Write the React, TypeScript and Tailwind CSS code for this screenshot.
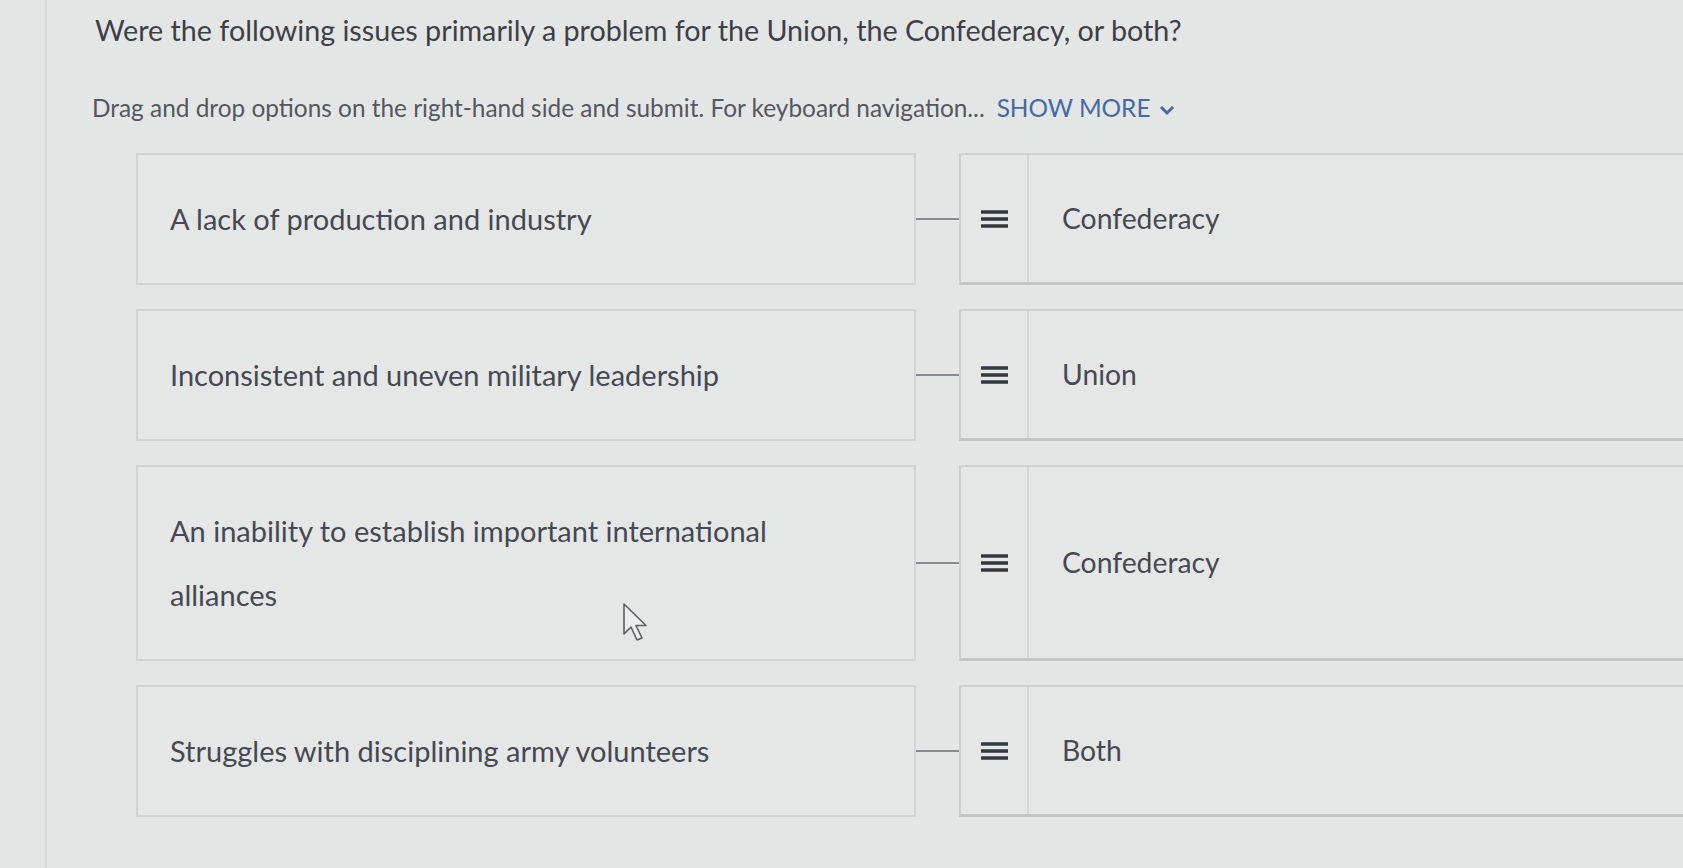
import React from "react";

type Row = { issue: string; answer: string; tall?: boolean };

const ROWS: Row[] = [
  { issue: "A lack of production and industry", answer: "Confederacy" },
  { issue: "Inconsistent and uneven military leadership", answer: "Union" },
  {
    issue: "An inability to establish important international alliances",
    answer: "Confederacy",
    tall: true,
  },
  { issue: "Struggles with disciplining army volunteers", answer: "Both" },
];

function DragHandle() {
  return (
    <svg width="29" height="20" viewBox="0 0 29 20" fill="none">
      <path d="M1 3h27M1 10h27M1 17h27" stroke="#33373f" strokeWidth="3.4" />
    </svg>
  );
}

function Cursor() {
  return (
    <svg
      className="pointer-events-none absolute left-[622px] top-[602px]"
      width="28"
      height="40"
      viewBox="0 0 28 40"
      fill="none"
    >
      <path
        d="M2 2 L2 32 L9 25 L15 38 L20 36 L14 23.5 L24 23.5 Z"
        fill="#eceeed"
        stroke="#5a5e66"
        strokeWidth="1.6"
        strokeLinejoin="round"
      />
    </svg>
  );
}

export default function App() {
  return (
    <div
      className="relative h-[868px] w-full overflow-hidden bg-[#e4e6e5] text-[#454953]"
      style={{ fontFamily: "Lato, 'Open Sans', sans-serif" }}
    >
      <div className="ml-[45px] h-full border-l-2 border-[#d7d9d8]">
        <h1 className="pl-[48px] pt-[13px] text-[28.7px] leading-[34px] text-[#3c4049]">
          Were the following issues primarily a problem for the Union, the Confederacy, or both?
        </h1>
        <p className="mt-[46px] flex items-center pl-[45px] text-[24.4px] leading-[30px] text-[#535761]">
          <span>
            Drag and drop options on the right-hand side and submit. For keyboard navigation...
          </span>
          <span className="ml-[12px] text-[#436aa6]">SHOW MORE</span>
          <svg className="ml-[9px] mt-[4px]" width="16" height="12" viewBox="0 0 16 12" fill="none">
            <path d="M2 3l6 6 6-6" stroke="#436aa6" strokeWidth="3" />
          </svg>
        </p>

        <div className="mt-[30px] flex flex-col gap-[24px] pl-[89px]">
          {ROWS.map((row) => (
            <div key={row.issue} className="flex items-stretch">
              <div
                className={`w-[780px] shrink-0 border-2 border-[#d1d4d3] bg-[#e5e7e6] px-[32px] py-[32px] text-[29px] leading-[64px] ${
                  row.tall ? "pr-[100px]" : ""
                }`}
              >
                {row.issue}
              </div>
              <div className="flex w-[43px] shrink-0 items-center">
                <div className="h-[2px] w-full bg-[#868a91]" />
              </div>
              <div className="flex w-[800px] shrink-0 border-l-2 border-t-2 border-b-[3px] border-[#cdd0cf] border-b-[#c2c5c4] bg-[#e5e7e6]">
                <div className="flex w-[68px] shrink-0 items-center justify-center border-r-2 border-[#d3d6d5]">
                  <DragHandle />
                </div>
                <div className="flex items-center pl-[33px] text-[28.3px] text-[#454953]">
                  {row.answer}
                </div>
              </div>
            </div>
          ))}
        </div>
      </div>
      <Cursor />
    </div>
  );
}
